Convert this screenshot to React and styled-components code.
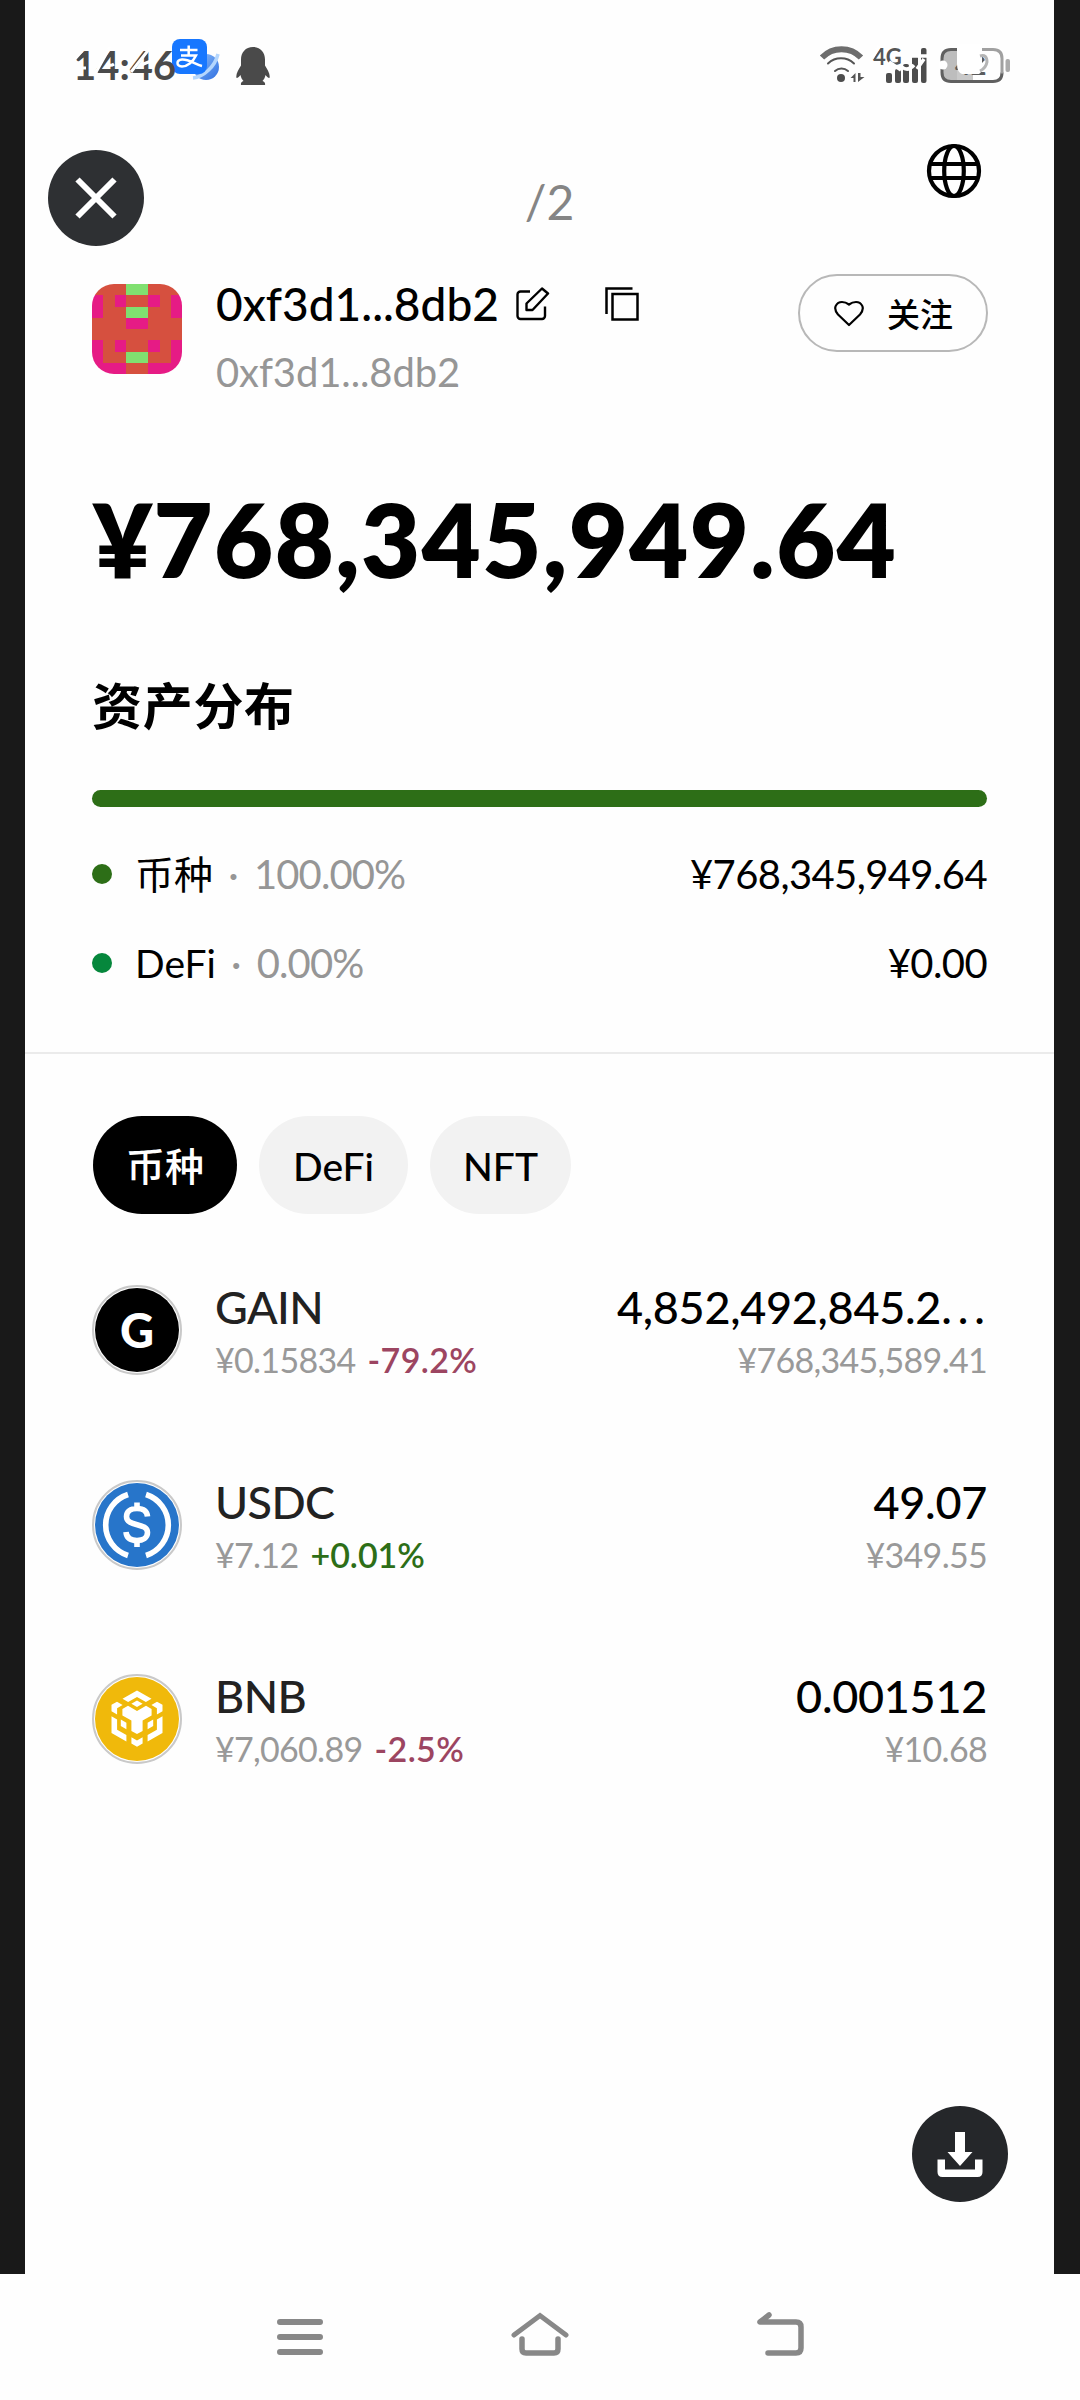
import React from "react";
import styled, { createGlobalStyle } from "styled-components";

const identicon = [
  "rrrggrrr",
  "mrmrrmrm",
  "mrrggrrm",
  "rrrmmrrr",
  "rrrrrrrr",
  "mrmrrmrm",
  "mrrggrrm",
  "mmmrrmmm"
];

const cellColors = { r: "#d6503f", g: "#80e070", m: "#e61b85" };

const shares = [
  { label: "币种", percent: "100.00%", value: "¥768,345,949.64", color: "#2d6e17" },
  { label: "DeFi", percent: "0.00%", value: "¥0.00", color: "#06873c" }
];

const tabs = [
  { label: "币种", width: 144, active: true },
  { label: "DeFi", width: 149 },
  { label: "NFT", width: 141 }
];

const GainLogo = () => <GainBadge>G</GainBadge>;

const UsdcLogo = () => (
  <svg width="84" height="84" viewBox="0 0 84 84">
    <circle cx="42" cy="42" r="42" fill="#2775ca" />
    <g fill="none" stroke="#fff" strokeWidth="5.6">
      <path d="M33 11.5a32 32 0 0 0 0 61M51 11.5a32 32 0 0 1 0 61" />
      <path d="M52.500 33.500C52 27.500 47.500 25.500 42 25.500C35.500 25.500 31.500 28.500 31.500 33.500C31.500 44.500 52.500 39 52.500 49.500C52.500 54.500 48 57.500 42 57.500C35.500 57.500 31.500 55 31 49M42 19.500v6.500M42 57v7" />
    </g>
  </svg>
);

const BnbLogo = () => (
  <svg width="84" height="84" viewBox="0 0 84 84">
    <circle cx="42" cy="42" r="42" fill="#f0b90b" />
    <g fill="#fff">
      <path d="M42 13.500l14.500 8.300-5.600 3.200-8.900-5.100-8.900 5.100-5.600-3.200z" />
      <path d="M42 23.500l5.600 3.200-5.600 3.300-5.600-3.300z" />
      <path d="M22 24.800l5.600 3.200-5.500 3.200v6.300l-5.600-3.300v-6.400zM62 24.800l-5.600 3.200 5.500 3.200v6.300l5.600-3.300v-6.400z" />
      <path d="M33 28.800l9 5.200 9-5.200 5.600 3.200v6.400l-9 5.200v10.300l-5.600 3.200-5.600-3.200V43.600l-9-5.200V32z" />
      <path d="M25.800 42.500l5.600 3.200v6.500l-5.600-3.300zM58.200 42.500l-5.600 3.200v6.500l5.600-3.300z" />
      <path d="M16.500 39.200l5.600 3.200v10.400l9.300 5.300v6.500l-14.900-8.600zM67.500 39.200l-5.600 3.200v10.400l-9.300 5.300v6.500l14.900-8.600z" />
      <path d="M36.400 60.200l5.600 3.200 5.600-3.200v6.300L42 69.800l-5.600-3.300z" />
    </g>
  </svg>
);

const coins = [
  {
    name: "GAIN",
    price: "¥0.15834",
    change: "-79.2%",
    amount: "4,852,492,845.2",
    clipped: true,
    value: "¥768,345,589.41",
    Logo: GainLogo
  },
  {
    name: "USDC",
    price: "¥7.12",
    change: "+0.01%",
    up: true,
    amount: "49.07",
    value: "¥349.55",
    Logo: UsdcLogo
  },
  {
    name: "BNB",
    price: "¥7,060.89",
    change: "-2.5%",
    amount: "0.001512",
    value: "¥10.68",
    Logo: BnbLogo
  }
];

const AppIcons = () => (
  <svg width="100" height="52" viewBox="172 36 100 52">
    <defs>
      <linearGradient id="planet" x1="0" y1="0" x2="1" y2="1">
        <stop offset="0" stopColor="#8fc0fb" />
        <stop offset="1" stopColor="#2f6fe0" />
      </linearGradient>
    </defs>
    <circle cx="206" cy="67" r="13" fill="url(#planet)" />
    <path d="M193 78C203 77 215 67 218 54" fill="none" stroke="#b4d6fd" strokeWidth="3.500" />
    <rect x="172" y="39" width="35" height="35" rx="8" fill="#1777ff" />
    <path
      d="M180 50h17.500M188.700 45.500v9.500M181 55.500h15C193 62 187 66.500 182 66.500C176 66 176 60 182 59.500C189 59 194 64 202 66"
      fill="none"
      stroke="#fff"
      strokeWidth="2.500"
    />
    <path
      d="M253 47c-7.500 0-12 5.500-12 12.500v6c-2.500 4-5.500 8.500-4.500 12.500c1.500 0 3-1.500 4-3c.4 2.500 1.600 4.500 3 6c-2 .8-3 2-2.500 4h24c.5-2-.5-3.200-2.500-4c1.400-1.500 2.600-3.500 3-6c1 1.500 2.500 3 4 3c1-4-2-8.500-4.500-12.500v-6c0-7-4.500-12.500-12-12.500z"
      fill="#4a4a4a"
    />
  </svg>
);

const SystemIcons = () => (
  <svg width="194" height="56" viewBox="818 36 194 56">
    <g fill="none" stroke="#555" strokeLinecap="round">
      <path d="M822 57.500a27 27 0 0 1 39 0" stroke="#6d6d6d" strokeWidth="6" strokeLinecap="butt" />
      <path d="M828 63.500a19 19 0 0 1 26 0" strokeWidth="2" />
      <path d="M835 71a10 10 0 0 1 13 0" strokeWidth="2" />
    </g>
    <circle cx="841" cy="78" r="4" fill="#4d4d4d" />
    <path d="M850.500 78l5-5v9h-2v-4zM858 73v9l6.500-5h-4v-4z" fill="#555" />
    <g fill="#4d4d4d">
      <rect x="886" y="73" width="6" height="10" rx="2" />
      <rect x="895" y="69" width="6" height="14" rx="2" />
      <rect x="903" y="64" width="6" height="19" rx="2" />
      <rect x="912" y="56" width="6" height="27" rx="2" />
      <rect x="921" y="48" width="5.500" height="35" rx="2" />
    </g>
    <text x="873" y="65" fontFamily="Lato, sans-serif" fontSize="22" fontWeight="700" fill="#555">4G</text>
    <path d="M872 58l7-12M889 62l12 8M902 67q6 5 12-2M912 56h16M917 69l7-10" stroke="#fff" strokeWidth="3.500" fill="none" />
    <path d="M951 49h7v33h-7q-9 0-9-9V58q0-9 9-9z" fill="#bdbdbd" />
    <rect x="957" y="50" width="16" height="30" fill="#c9c9c9" />
    <text x="955" y="75" fontFamily="Lato, sans-serif" fontSize="27" fontWeight="700" fill="#5c5c5c">42</text>
    <path d="M957 44h25v19q8-9 9 0l-12 11h-17q-5-2-5-10z" fill="#fff" />
    <path d="M980 56q7-2 7 6-1 6-7 9" fill="none" stroke="#b5b5b5" strokeWidth="3" />
    <path d="M957 49.500h-6q-9 0-9 9v14q0 9 9 9h42q9 0 9-9" fill="none" stroke="#606060" strokeWidth="3" />
    <path d="M982 49.500h11q9 0 9 9v15" fill="none" stroke="#a0a0a0" strokeWidth="3" />
    <circle cx="943" cy="65" r="4.500" fill="#fff" />
    <rect x="1005.500" y="59" width="4.500" height="13" rx="2" fill="#ababab" />
  </svg>
);

const GlobeIcon = () => (
  <svg width="56" height="56" viewBox="0 0 56 56" fill="none" stroke="#000" strokeWidth="4.200">
    <circle cx="28" cy="28" r="25" />
    <ellipse cx="28" cy="28" rx="9.800" ry="25" />
    <path d="M4 21h48M4 35h48" />
  </svg>
);

const EditIcon = () => (
  <svg width="34" height="34" viewBox="0 0 34 34" fill="none" stroke="#000" strokeWidth="2.400">
    <path d="M14 4.500H4.500a3 3 0 0 0-3 3V29a3 3 0 0 0 3 3h21.500a3 3 0 0 0 3-3V19.500" />
    <path d="M10.500 23v-6.500L26 1.500l6 5L16.500 23z" strokeLinejoin="round" />
  </svg>
);

const CopyIcon = () => (
  <svg width="34" height="34" viewBox="0 0 34 34" fill="none" stroke="#000" strokeWidth="2.500">
    <path d="M1.500 27V1.500H27.500" />
    <rect x="7.500" y="7" width="25" height="25.500" />
  </svg>
);

const HeartIcon = () => (
  <svg width="30" height="27" viewBox="0 0 30 27" fill="none" stroke="#000" strokeWidth="2.200" strokeLinejoin="round">
    <path d="M15 25L4 14.500C-2 7.500 3 2 8 2C11 2 13 3 15 4.500C17 3 19 2 22 2C27 2 32 7.500 26 14.500z" />
  </svg>
);

const App = () => {
  return (
    <Screen>
      <GlobalStyle />
      <Viewer>
        <StatusBar>
          <Clock>
            14:46
            <Glare width="110" height="44" viewBox="70 42 110 44">
              <path d="M74 60l8-9M81 68h5M95 74l15-27M107 63q3 4 7 1M131 72l19-24M141 65l10-4" stroke="#fff" strokeWidth="3" fill="none" />
            </Glare>
          </Clock>
          <AppIcons />
          <StatusRight>
            <SystemIcons />
          </StatusRight>
        </StatusBar>
        <TopBar>
          <CloseButton>
            <svg width="42" height="42" viewBox="0 0 42 42">
              <path d="M2.500 2.500l37 37M39.500 2.500l-37 37" stroke="#fff" strokeWidth="6" />
            </svg>
          </CloseButton>
          <PageIndex>/2</PageIndex>
          <GlobeButton>
            <GlobeIcon />
          </GlobeButton>
        </TopBar>

        <Profile>
          <Avatar>
            {identicon
              .join("")
              .split("")
              .map((cell, i) => (
                <Cell key={i} $color={cellColors[cell]} />
              ))}
          </Avatar>
          <Identity>
            <NameRow>
              <Name>0xf3d1...8db2</Name>
              <EditIcon />
              <CopyWrapper>
                <CopyIcon />
              </CopyWrapper>
            </NameRow>
            <Address>0xf3d1...8db2</Address>
          </Identity>
          <FollowButton>
            <HeartIcon />
            关注
          </FollowButton>
        </Profile>

        <Balance>¥768,345,949.64</Balance>
        <SectionTitle>资产分布</SectionTitle>
        <ShareBar />
        <ShareList>
          {shares.map(share => (
            <ShareRow key={share.label}>
              <Dot $color={share.color} />
              <ShareLabel>{share.label}</ShareLabel>
              <Separator>·</Separator>
              <Percent>{share.percent}</Percent>
              <ShareValue>{share.value}</ShareValue>
            </ShareRow>
          ))}
        </ShareList>
        <Divider />

        <Tabs>
          {tabs.map(tab => (
            <Tab key={tab.label} $width={tab.width} $active={tab.active}>
              {tab.label}
            </Tab>
          ))}
        </Tabs>

        <CoinList>
          {coins.map(({ name, price, change, up, amount, clipped, value, Logo }) => (
            <CoinRow key={name}>
              <CoinLogo>
                <Logo />
              </CoinLogo>
              <CoinInfo>
                <CoinName>{name}</CoinName>
                <CoinSub>
                  {price}
                  <Change $up={up}>{change}</Change>
                </CoinSub>
              </CoinInfo>
              <CoinTotals>
                <Amount>
                  {amount}
                  {clipped && <Ellipsis>...</Ellipsis>}
                </Amount>
                <CoinSub>{value}</CoinSub>
              </CoinTotals>
            </CoinRow>
          ))}
        </CoinList>

        <DownloadButton>
          <svg width="46" height="47" viewBox="0 0 46 47" fill="#fff">
            <path d="M18 1h10v20h7.500L23 35 10.500 21H18z" />
            <path d="M.5 28.500H8V38.500h30V28.500h7.500V41q0 5-5 5h-35q-5 0-5-5z" />
          </svg>
        </DownloadButton>
      </Viewer>

      <NavBar>
        <svg width="46" height="46" viewBox="0 0 46 46" stroke="#888" strokeWidth="6" strokeLinecap="round">
          <path d="M3 11h40M3 26h40M3 41h40" />
        </svg>
        <svg width="58" height="46" viewBox="0 0 58 46" fill="none" stroke="#888" strokeLinecap="round">
          <path d="M3 24L29 4.500 55 24" strokeWidth="5" />
          <path d="M11 28v10q0 4 4 4h28q4 0 4-4V28" strokeWidth="5.500" />
        </svg>
        <svg width="50" height="46" viewBox="0 0 50 46" fill="none" stroke="#888" strokeWidth="5.500" strokeLinecap="round" strokeLinejoin="round">
          <path d="M13 4L4 11h36q5 0 5 5v21q0 5-5 5H12" />
        </svg>
      </NavBar>
    </Screen>
  );
};
export default App;

const GlobalStyle = createGlobalStyle`
  body {
    margin: 0;
    background: #fefefe;
  }

  * {
    box-sizing: border-box;
  }

  svg {
    display: block;
    flex-shrink: 0;
  }
`;

const Screen = styled.div`
  width: 1080px;
  height: 2400px;
  overflow: hidden;
  color: #000;
  font-family: Lato, "Noto Sans CJK SC", sans-serif;
  background: #fefefe;
`;

const Viewer = styled.div`
  display: flex;
  flex-direction: column;
  height: 2274px;
  border-left: 25px solid #191919;
  border-right: 26px solid #191919;
`;

const StatusBar = styled.div`
  display: flex;
  height: 110px;
  padding: 36px 42px 0 48px;
`;

const Clock = styled.div`
  position: relative;
  width: 99px;
  height: 54px;
  margin-top: 2px;
  color: #4a4a4a;
  font-size: 40px;
  font-weight: 700;
  line-height: 54px;
`;

const Glare = styled.svg`
  position: absolute;
  left: -3px;
  top: 4px;
`;

const StatusRight = styled.div`
  margin-left: auto;
`;

const TopBar = styled.div`
  display: flex;
  align-items: flex-start;
  justify-content: space-between;
  height: 150px;
  padding: 0 72px 0 23px;
`;

const CloseButton = styled.div`
  display: flex;
  align-items: center;
  justify-content: center;
  width: 96px;
  height: 96px;
  margin-top: 40px;
  border-radius: 50%;
  background: #2e3033;
`;

const PageIndex = styled.div`
  margin: 62px 0 0 29px;
  color: #858585;
  font-size: 48px;
  line-height: 60px;
`;

const GlobeButton = styled.div`
  margin-top: 33px;
`;

const Profile = styled.div`
  display: flex;
  align-items: flex-start;
  height: 210px;
  padding: 13px 66px 0 67px;
`;

const Avatar = styled.div`
  display: grid;
  grid-template-columns: repeat(8, 1fr);
  grid-template-rows: repeat(8, 1fr);
  width: 90px;
  height: 90px;
  margin-top: 11px;
  border-radius: 22px;
  overflow: hidden;
`;

const Cell = styled.div`
  background: ${props => props.$color};
`;

const Identity = styled.div`
  margin-left: 34px;
`;

const NameRow = styled.div`
  display: flex;
  align-items: center;
  height: 61px;
`;

const Name = styled.div`
  width: 300px;
  font-size: 46px;
  font-weight: 500;
  line-height: 60px;
`;

const CopyWrapper = styled.div`
  margin-left: 55px;
`;

const Address = styled.div`
  margin-top: 10px;
  color: #969696;
  font-size: 40px;
  line-height: 56px;
  letter-spacing: -0.1px;
`;

const FollowButton = styled.div`
  display: flex;
  align-items: center;
  gap: 23px;
  width: 190px;
  height: 78px;
  margin: 1px 0 0 auto;
  padding-left: 34px;
  border: 2px solid #b8b8b8;
  border-radius: 39px;
  font-size: 33px;
  font-weight: 500;
`;

const Balance = styled.div`
  height: 140px;
  padding-left: 68px;
  font-size: 102px;
  font-weight: 800;
  line-height: 138px;
  letter-spacing: 1.4px;
  white-space: nowrap;
`;

const SectionTitle = styled.div`
  height: 180px;
  padding: 60px 0 0 67px;
  font-size: 50px;
  font-weight: 700;
  line-height: 72px;
  letter-spacing: 0.7px;
`;

const ShareBar = styled.div`
  flex-shrink: 0;
  height: 17px;
  margin: 0 67px;
  border-radius: 9px;
  background: #2d6e17;
`;

const ShareList = styled.div`
  height: 245px;
  padding: 22px 67px 0 67px;
`;

const ShareRow = styled.div`
  display: flex;
  align-items: center;
  height: 89px;
  font-size: 40px;
  line-height: 56px;
`;

const Dot = styled.div`
  width: 20px;
  height: 20px;
  margin-right: 23px;
  border-radius: 50%;
  background: ${props => props.$color};
`;

const ShareLabel = styled.div`
  font-size: 39px;
`;

const Separator = styled.div`
  width: 41px;
  color: #969696;
  text-align: center;
`;

const Percent = styled.div`
  color: #969696;
  letter-spacing: -0.9px;
`;

const ShareValue = styled.div`
  margin-left: auto;
  letter-spacing: -0.6px;
`;

const Divider = styled.div`
  flex-shrink: 0;
  height: 2px;
  background: #ebebeb;
`;

const Tabs = styled.div`
  display: flex;
  gap: 22px;
  padding: 62px 67px 0 68px;
`;

const Tab = styled.div`
  width: ${props => props.$width}px;
  height: 98px;
  border-radius: 49px;
  color: ${props => (props.$active ? "#fff" : "#000")};
  font-size: 39px;
  font-weight: 500;
  line-height: 100px;
  text-align: center;
  background: ${props => (props.$active ? "#000" : "#f2f2f2")};
`;

const CoinList = styled.div`
  padding: 63px 67px 0 67px;
`;

const CoinRow = styled.div`
  display: flex;
  align-items: flex-start;
  height: 194.5px;
`;

const CoinLogo = styled.div`
  display: flex;
  width: 90px;
  height: 90px;
  margin-top: 8px;
  padding: 1px;
  border: 2px solid #c9c9c9;
  border-radius: 50%;
  overflow: hidden;
`;

const GainBadge = styled.div`
  width: 84px;
  height: 84px;
  border-radius: 50%;
  color: #fff;
  font-size: 47px;
  font-weight: 900;
  line-height: 84px;
  text-align: center;
  background: #000;
`;

const CoinInfo = styled.div`
  margin-left: 33px;
`;

const CoinName = styled.div`
  color: #222;
  font-size: 45px;
  font-weight: 500;
  line-height: 60px;
  letter-spacing: -0.6px;
`;

const CoinSub = styled.div`
  color: #999;
  font-size: 34px;
  line-height: 46px;
  letter-spacing: -0.7px;
`;

const Change = styled.span`
  margin-left: 12px;
  color: ${props => (props.$up ? "#2d6e17" : "#9c4561")};
  font-weight: 600;
  letter-spacing: ${props => (props.$up ? 0 : 0.4)}px;
`;

const CoinTotals = styled.div`
  margin-left: auto;
  text-align: right;
`;

const Amount = styled.div`
  font-size: 45px;
  font-weight: 500;
  line-height: 60px;
  letter-spacing: -0.3px;
`;

const Ellipsis = styled.span`
  margin-right: -4px;
  letter-spacing: 6px;
`;

const DownloadButton = styled.div`
  display: flex;
  align-items: center;
  justify-content: center;
  width: 96px;
  height: 96px;
  margin: auto 46px 72px auto;
  border-radius: 50%;
  background: #25272a;
`;

const NavBar = styled.div`
  display: flex;
  justify-content: space-between;
  height: 126px;
  padding: 37px 274px 0 277px;
`;
